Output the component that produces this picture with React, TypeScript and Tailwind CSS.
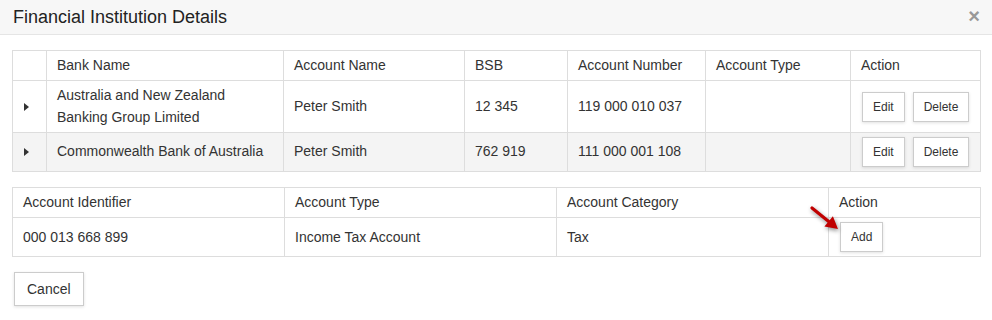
import React from "react";

const banks = [
  { name: "Australia and New Zealand Banking Group Limited", account: "Peter Smith", bsb: "12 345", number: "119 000 010 037", type: "" },
  { name: "Commonwealth Bank of Australia", account: "Peter Smith", bsb: "762 919", number: "111 000 001 108", type: "" },
];

const cell = "border border-[#ddd] px-[10px] py-[4px] text-left align-middle font-normal";
const btn = "border border-[#ccc] bg-white px-[10px] py-[5px] text-[12px] leading-[18px] text-[#333] shadow-[0_1px_3px_rgba(0,0,0,0.12)]";

function Arrow() {
  return (
    <svg className="absolute left-[806px] top-[202px] drop-shadow-[1px_2px_2px_rgba(0,0,0,0.45)]" width="40" height="34" viewBox="0 0 40 34">
      <line x1="6" y1="6" x2="23" y2="19.7" stroke="#c00000" strokeWidth="3.2" strokeLinecap="round" />
      <polygon points="32,27 18.4,24.6 26.9,14.2" fill="#c00000" />
    </svg>
  );
}

export default function App() {
  return (
    <div className="relative w-[992px] h-[320px] bg-white text-[14px] leading-[21px] text-[#333]" style={{ fontFamily: '"Liberation Sans", Arial, sans-serif' }}>
      {/* Header */}
      <div className="h-[35px] flex items-center justify-between pl-[13px] pr-[12px] bg-[#f7f7f7] border-b border-[#e5e5e5]">
        <h1 className="text-[18px] leading-[20px] text-[#222]">Financial Institution Details</h1>
        <span className="text-[20px] font-bold leading-none text-[#999] -mt-[3px]">×</span>
      </div>

      <div className="pt-[15px] pl-3 pr-[11px]">
        {/* Bank table */}
        <table className="w-full table-fixed border-collapse">
          <colgroup>
            <col className="w-[34px]" />
            <col className="w-[237px]" />
            <col className="w-[181px]" />
            <col className="w-[103px]" />
            <col className="w-[138px]" />
            <col className="w-[145px]" />
            <col className="w-[130px]" />
          </colgroup>
          <thead>
            <tr>
              <th className={cell}></th>
              <th className={cell}>Bank Name</th>
              <th className={cell}>Account Name</th>
              <th className={cell}>BSB</th>
              <th className={cell}>Account Number</th>
              <th className={cell}>Account Type</th>
              <th className={cell}>Action</th>
            </tr>
          </thead>
          <tbody className="leading-[21.5px]">
            {banks.map((b, i) => (
              <tr key={i} className={i % 2 === 1 ? "bg-[#f4f4f4]" : "bg-white"}>
                <td className={cell + " text-center"}>
                  <span className="inline-block w-0 h-0 border-y-[4px] border-y-transparent border-l-[5px] border-l-[#333] ml-[1px]" />
                </td>
                <td className={cell}>{b.name}</td>
                <td className={cell}>{b.account}</td>
                <td className={cell}>{b.bsb}</td>
                <td className={cell}>{b.number}</td>
                <td className={cell}>{b.type}</td>
                <td className={cell + " pl-[11px]"}>
                  <div className="flex gap-[8px]">
                    <button className={btn}>Edit</button>
                    <button className={btn}>Delete</button>
                  </div>
                </td>
              </tr>
            ))}
          </tbody>
        </table>

        {/* Account table */}
        <table className="w-full table-fixed border-collapse mt-[15px]">
          <colgroup>
            <col className="w-[272px]" />
            <col className="w-[272px]" />
            <col className="w-[272px]" />
            <col className="w-[152px]" />
          </colgroup>
          <thead>
            <tr>
              <th className={cell}>Account Identifier</th>
              <th className={cell}>Account Type</th>
              <th className={cell}>Account Category</th>
              <th className={cell}>Action</th>
            </tr>
          </thead>
          <tbody>
            <tr>
              <td className={cell}>000 013 668 899</td>
              <td className={cell}>Income Tax Account</td>
              <td className={cell}>Tax</td>
              <td className={cell + " pl-[11px]"}>
                <button className={btn}>Add</button>
              </td>
            </tr>
          </tbody>
        </table>

        <button className="mt-[15px] ml-[2px] h-[34px] px-[12px] border border-[#ccc] bg-white text-[14px] text-[#333] shadow-[0_1px_3px_rgba(0,0,0,0.12)]">
          Cancel
        </button>
      </div>

      <Arrow />
    </div>
  );
}
